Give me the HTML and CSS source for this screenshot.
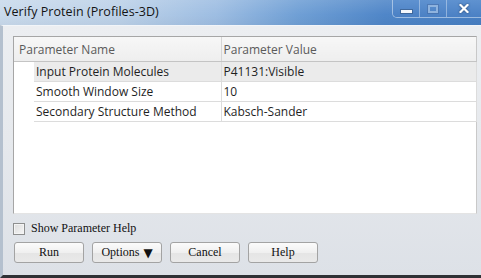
FILE: index.html
```html
<!DOCTYPE html>
<html>
<head>
<meta charset="utf-8">
<link rel="stylesheet" href="styles.css">
</head>
<body>
<div class="window">
  <div class="titlebar">
    <span class="title">Verify Protein (Profiles-3D)</span>
    <div class="caption">
      <div class="cap-btn cap-min"><span class="min-glyph"></span></div>
      <div class="cap-btn cap-max"><span class="max-glyph"></span></div>
      <div class="cap-btn cap-close">
        <svg width="10" height="9" viewBox="0 0 10 9"><path d="M1.5 1 L8.5 8 M8.5 1 L1.5 8" stroke="#fff" stroke-width="2.2" stroke-linecap="square"/></svg>
      </div>
    </div>
  </div>
  <div class="client">
    <div class="grid">
      <table class="params">
        <colgroup><col class="c-indent"><col class="c-name"><col class="c-value"></colgroup>
        <thead>
          <tr><th colspan="2">Parameter Name</th><th>Parameter Value</th></tr>
        </thead>
        <tbody>
          <tr class="sel"><td class="indent"></td><td>Input Protein Molecules</td><td>P41131:Visible</td></tr>
          <tr><td class="indent"></td><td>Smooth Window Size</td><td>10</td></tr>
          <tr><td class="indent"></td><td>Secondary Structure Method</td><td>Kabsch-Sander</td></tr>
        </tbody>
      </table>
    </div>
    <label class="check"><span class="box"></span><span class="mono">Show Parameter Help</span></label>
    <div class="buttons">
      <button class="btn mono">Run</button>
      <button class="btn mono">Options <span class="tri">&#9660;</span></button>
      <button class="btn mono">Cancel</button>
      <button class="btn mono">Help</button>
    </div>
  </div>
</div>
</body>
</html>
```
FILE: styles.css
```css
html, body {
  margin: 0;
  padding: 0;
  width: 481px;
  height: 278px;
  overflow: hidden;
  background: #2e3034;
}
.window {
  width: 481px;
  height: 278px;
  display: flex;
  flex-direction: column;
  font-family: "Open Sans", "Noto Sans", sans-serif;
}
.titlebar {
  position: relative;
  height: 25px;
  flex: none;
  background:
    linear-gradient(to bottom, rgba(255,255,255,0.12), rgba(255,255,255,0) 60%, rgba(0,0,0,0.03)),
    linear-gradient(to right, #c9daec 0%, #bcd1e8 25%, #9dbde2 45%, #6f9fd5 62%, #4f86c8 80%, #477fc3 100%);
}
.title {
  position: absolute;
  left: 4px;
  top: 3px;
  font-size: 12.5px;
  color: #141414;
  letter-spacing: 0.05px;
}
.caption {
  position: absolute;
  right: 0;
  top: 0;
  height: 17px;
  display: flex;
  border: 1px solid rgba(225, 235, 248, 0.55);
  border-top: none;
  border-right: none;
  border-radius: 0 0 0 5px;
  overflow: hidden;
}
.cap-btn {
  height: 17px;
  display: flex;
  align-items: center;
  justify-content: center;
  background: linear-gradient(to bottom, #5f92d0, #4a80c4);
}
.cap-min { width: 26px; border-right: 1px solid rgba(225,235,248,0.45); border-radius: 0 0 0 4px; }
.cap-max { width: 26px; border-right: 1px solid rgba(225,235,248,0.45); }
.cap-close { width: 34px; }
.min-glyph {
  width: 11px;
  height: 3px;
  margin-top: 5px;
  background: #f4f7fb;
  box-shadow: 0 0 0 1px rgba(40,60,90,0.4);
}
.max-glyph {
  width: 6px;
  height: 4px;
  border: 2px solid #8fb3de;
  box-shadow: 0 0 0 1px rgba(60,90,140,0.35);
}
.cap-close svg { filter: drop-shadow(0 0 1px rgba(20,40,70,0.7)); }

.client {
  flex: 1;
  display: flex;
  flex-direction: column;
  border-left: 3px solid #b4c0ce;
  border-bottom: 3px solid #2f3135;
  border-top: 1px solid #f2f5f9;
  padding: 10px 4px 0 10px;
  background: linear-gradient(to bottom, #eceef1 0%, #e6e9ed 45%, #dde1e7 100%);
}
.grid {
  width: 462px;
  height: 176px;
  border: 1px solid #a6a6a6;
  border-right-color: #c9c9c9;
  border-bottom-color: #e4e4e4;
  background: #fff;
}
.params {
  width: 462px;
  border-collapse: collapse;
  table-layout: fixed;
  font-size: 12px;
}
.c-indent { width: 20px; }
.c-name { width: 187px; }
.c-value { width: 255px; }
.params th {
  height: 24px;
  padding: 0 0 0 5px;
  text-align: left;
  font-weight: normal;
  color: #5a5a5a;
  background: linear-gradient(to bottom, #f7f7f7, #eeeeee);
  border-bottom: 1px solid #c4c4c4;
  border-right: 1px solid #d6d6d6;
}
.params th:last-child { padding-left: 2px; border-right: 1px solid #c8c8c8; }
.params td {
  height: 19px;
  padding: 0 0 0 2px;
  color: #1f1f1f;
  border-bottom: 1px solid #dcdcdc;
  border-right: 1px solid #dcdcdc;
  white-space: nowrap;
}
.params td.indent {
  border-bottom: none;
  border-right: none;
  background: #fff;
}
.params tr.sel td { background: #ebebeb; }
.params tr.sel td.indent { background: #fff; }

.mono {
  font-family: "Liberation Serif", "Times New Roman", serif;
  font-size: 12px;
  font-weight: normal;
  letter-spacing: 0;
  color: #111;
}
.check {
  margin-top: 8px;
  height: 13px;
  display: flex;
  align-items: center;
  gap: 6px;
}
.box {
  width: 10px;
  height: 10px;
  border: 1px solid #8e8f8f;
  background: linear-gradient(135deg, #dcdcdc, #f6f6f6);
  box-shadow: inset 0 0 0 1px #f4f4f4;
}
.buttons {
  margin-top: 7px;
  display: flex;
  gap: 8px;
  padding-left: 1px;
}
.btn {
  width: 70px;
  height: 21px;
  padding: 0;
  border: 1px solid #a3a3a3;
  border-radius: 3px;
  background: linear-gradient(to bottom, #fbfbfb 0%, #f0f0f0 50%, #e5e5e5 51%, #e9e9e9 100%);
  display: flex;
  align-items: center;
  justify-content: center;
}
.tri { font-family: "DejaVu Sans", sans-serif; font-size: 12px; margin-left: 4px; letter-spacing: 0; }
```
